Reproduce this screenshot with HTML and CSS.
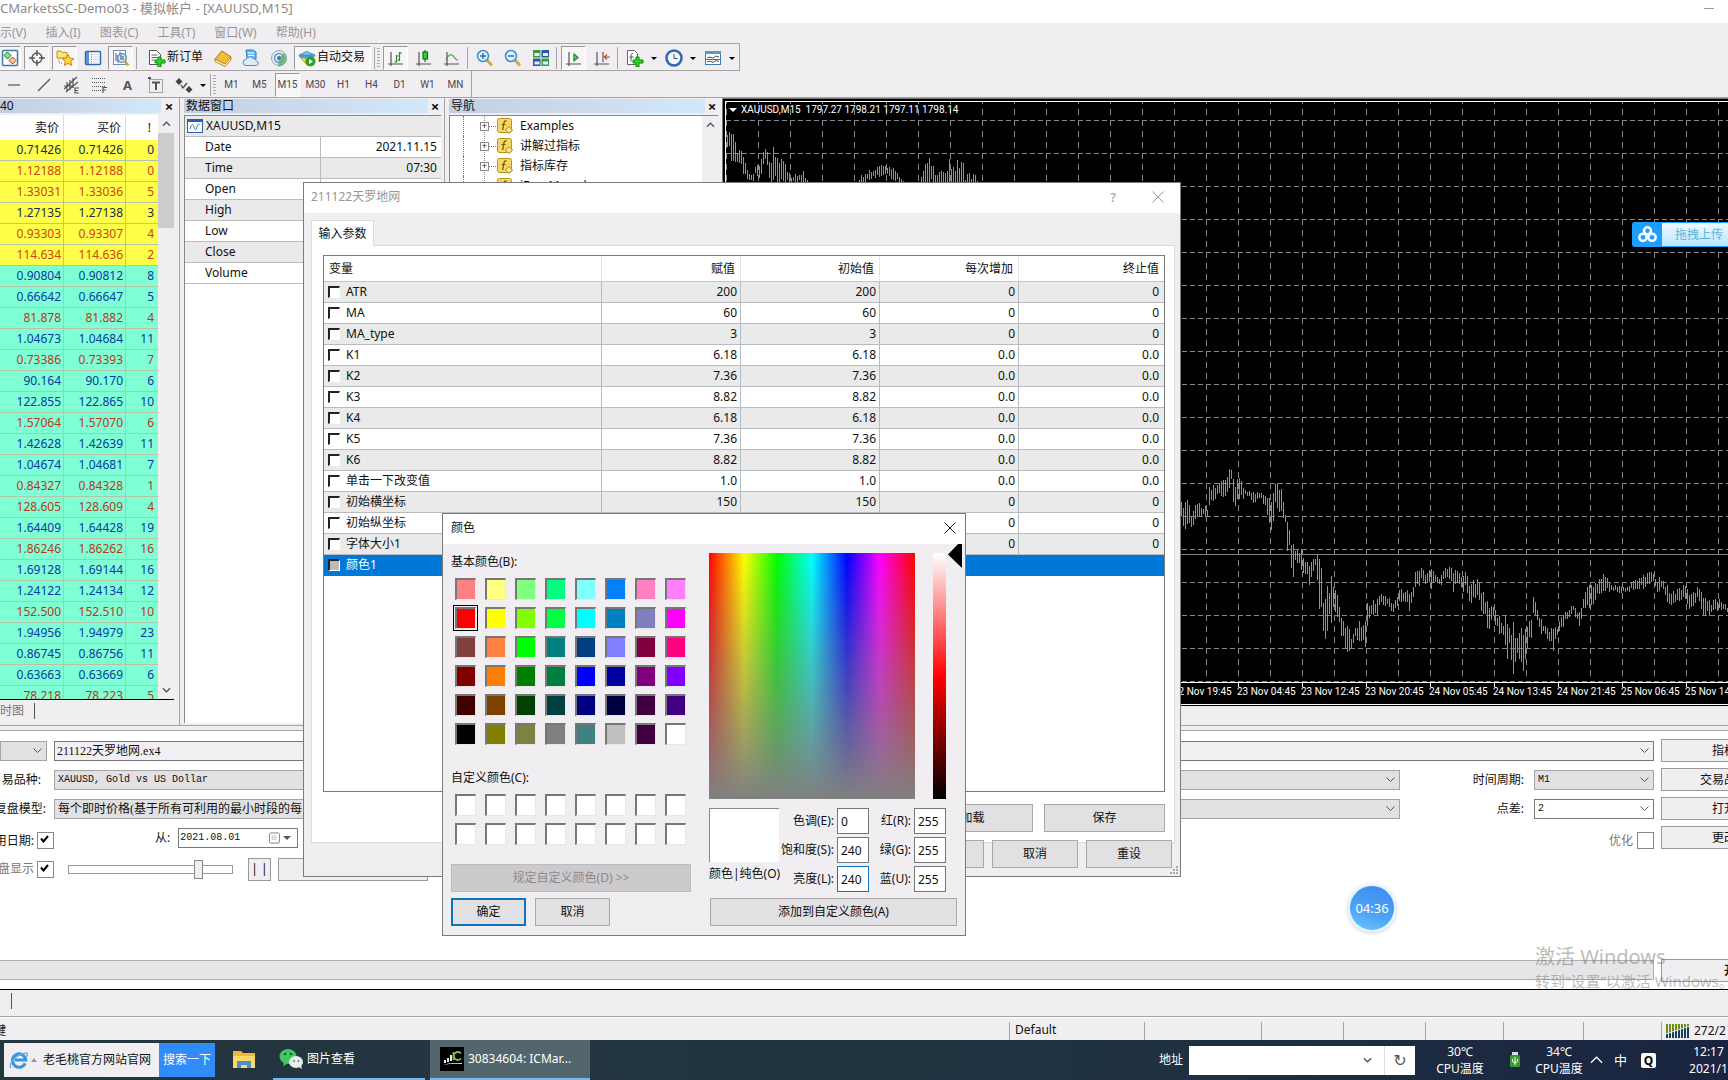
FILE: index.html
```html
<!DOCTYPE html>
<html lang="zh-CN">
  <head>
    <meta charset="UTF-8" />
    <meta name="viewport" content="width=device-width, initial-scale=1.0" />
    <title>CMarketsSC-Demo03 - 模拟帐户 - [XAUUSD,M15]</title>
    <link rel="stylesheet" href="styles.css">
  </head>

  <body>
    <header class="titlebar">
      <span>CMarketsSC-Demo03 - 模拟帐户 - [XAUUSD,M15]</span>
      <span class="minimize"></span>
    </header>

    <nav class="menubar">
      <a href="#">示(V)</a>
      <a href="#">插入(I)</a>
      <a href="#">图表(C)</a>
      <a href="#">工具(T)</a>
      <a href="#">窗口(W)</a>
      <a href="#">帮助(H)</a>
    </nav>

    <div class="toolbar toolbar-main">
      <button class="tool pressed first">
        <svg viewBox="0 0 18 18"><rect x="1.500" y="1.500" width="15" height="15" rx="1" fill="#fff" stroke="#3d7ab8" stroke-width="1.500"/><path d="M6.500 3l3.500 3.500-3.500 3.500L3 6.500z" fill="#8be08b" stroke="#187018"/><path d="M11.500 8l3.500 3.500-3.500 3.500L8 11.500z" fill="#ffc0a0" stroke="#d03010"/></svg>
      </button>
      <button class="tool pressed">
        <svg viewBox="0 0 18 18" fill="none" stroke="#555" stroke-width="1.400"><circle cx="9" cy="9" r="5"/><path d="M9 1v6M9 11v6M1 9h6M11 9h6"/></svg>
      </button>
      <button class="tool pressed">
        <svg viewBox="0 0 18 18"><path d="M1 2h4l1 1.500h5V9H1z" fill="#ffe57a" stroke="#c09018"/><path d="M3 10v4h4" fill="none" stroke="#888" stroke-dasharray="1 1"/><path d="M12 5.500l1.800 3.700 4 .5-3 2.700.8 4-3.600-2-3.600 2 .8-4-3-2.700 4-.5z" fill="#ffd83a" stroke="#c08a10"/></svg>
      </button>
      <button class="tool">
        <svg viewBox="0 0 18 18"><rect x="1.500" y="2.500" width="15" height="13" rx="1" fill="#fff" stroke="#3568a0" stroke-width="1.500"/><path d="M2 3h3v12H2z" fill="#5b93d0"/><path d="M7 5.500h1M7 8h1M7 10.500h1M7 13h1" stroke="#555"/><path d="M9 5.500h6M9 8h6M9 10.500h6M9 13h6" stroke="#c8daf0"/></svg>
      </button>
      <button class="tool pressed">
        <svg viewBox="0 0 18 18"><rect x="1.500" y="1.500" width="12" height="14" fill="#fff" stroke="#6c8eb0"/><path d="M4 4v8M6 6v8M8 3v4" stroke="#447"/><circle cx="10" cy="9" r="4.300" fill="#cfe6f8" fill-opacity=".85" stroke="#5a86b4" stroke-width="1.300"/><path d="M9 6v5M11 7v4" stroke="#447"/><path d="M13 12.500l3.500 4" stroke="#d8a030" stroke-width="2.500"/></svg>
      </button>
      <span class="sep"></span>
      <button class="tool wide order">
        <svg viewBox="0 0 18 18"><path d="M1.500 1.500h7l4 4v10h-11z" fill="#fff" stroke="#555"/><path d="M3.500 6h6M3.500 8.500h6M3.500 11h3" stroke="#666"/><path d="M10 8h3v3h4v3h-4v4h-3v-4H7v-3h3z" fill="#2fd02f" stroke="#0c8a0c"/></svg>
        新订单
      </button>
      <button class="tool">
        <svg viewBox="0 0 18 18"><path d="M1 10l7-8 9 6-6 8z" fill="#f2bd3c" stroke="#a8700c"/><path d="M1 10l10 5 6-7v3l-6 6.500L1 12.500z" fill="#fff0b8" stroke="#a8700c" stroke-width=".8"/></svg>
      </button>
      <button class="tool">
        <svg viewBox="0 0 18 18"><path d="M4 1h7l3 2v7H5z" fill="#6cb8f0" stroke="#2e80c8"/><path d="M6 4h6M6 6.500h6" stroke="#fff"/><path d="M4 16.500a3 3 0 0 1 0-6 4 4 0 0 1 7-1 3.500 3.500 0 0 1 3.500 2.500A2.300 2.300 0 0 1 14.500 16.500z" fill="#dcebfa" stroke="#5a8ac0"/></svg>
      </button>
      <button class="tool">
        <svg viewBox="0 0 18 18" fill="none"><circle cx="9" cy="9" r="7.500" fill="#e4ecf4" stroke="#8aa8c8"/><circle cx="9" cy="9" r="4.500" stroke="#6c98c8" stroke-width="1.500"/><path d="M9 9l-1 8.500A8 8 0 0 0 16.500 9a7 7 0 0 0-2.500-5z" fill="#4db04d" fill-opacity=".7"/><circle cx="9" cy="9" r="2" fill="#3878c0"/></svg>
      </button>
      <button class="tool wide pressed auto">
        <svg viewBox="0 0 18 18"><path d="M2 8.500h13l-5 8.500z" fill="#f4cf48" stroke="#b08818" stroke-width=".7"/><ellipse cx="9" cy="6.500" rx="8.500" ry="3" fill="#4a9ed8"/><path d="M4 6a5 5 0 0 1 9.500 0z" fill="#7cc4ee" stroke="#2a78b0" stroke-width=".6"/><circle cx="12.500" cy="12.500" r="5" fill="#28a428"/><path d="M11 10v5l4-2.500z" fill="#fff"/></svg>
        自动交易
      </button>
      <span class="sep"></span>
      <span class="grip"></span>
      <button class="tool pressed">
        <svg viewBox="0 0 18 18" fill="none" stroke="#555" stroke-width="1.200"><path d="M4 3v14M1 15h15"/><path d="M7.500 13h2V6M9.500 7h2M12.500 12V3M12.500 4H15M10.500 11h2" stroke="#2a8a2a"/></svg>
      </button>
      <button class="tool">
        <svg viewBox="0 0 18 18" fill="none" stroke="#555" stroke-width="1.200"><path d="M4 3v14M1 15h15"/><path d="M10 1v12" stroke="#187018"/><rect x="8" y="3" width="4.500" height="7" fill="#2fd02f" stroke="#187018"/></svg>
      </button>
      <button class="tool">
        <svg viewBox="0 0 18 18" fill="none" stroke="#555" stroke-width="1.200"><path d="M4 3v14M1 15h15"/><path d="M3 11c3-7 6-6 8-3s3 3 4 3" stroke="#3a9a3a"/></svg>
      </button>
      <span class="sep"></span>
      <button class="tool">
        <svg viewBox="0 0 18 18"><path d="M10.500 10.500l5.500 6" stroke="#d8a838" stroke-width="3"/><circle cx="7" cy="7" r="5.500" fill="#dff0ff" stroke="#3f8ecc" stroke-width="1.500"/><path d="M4 7h6M7 4v6" stroke="#2a70b0" stroke-width="1.500"/></svg>
      </button>
      <button class="tool">
        <svg viewBox="0 0 18 18"><path d="M10.500 10.500l5.500 6" stroke="#d8a838" stroke-width="3"/><circle cx="7" cy="7" r="5.500" fill="#dff0ff" stroke="#3f8ecc" stroke-width="1.500"/><path d="M4 7h6" stroke="#2a70b0" stroke-width="1.500"/></svg>
      </button>
      <button class="tool">
        <svg viewBox="0 0 18 18"><path d="M1 1h7.500v7.500H1zM9.500 9.500H17V17H9.500z" fill="#3c9a3c"/><path d="M9.500 1H17v7.500H9.500zM1 9.500h7.500V17H1z" fill="#2858a8"/><path d="M2.500 4h5v3h-5zM11 4h5v3h-5zM2.500 12.500h5v3h-5zM11 12.500h5v3h-5z" fill="#dff0ff"/></svg>
      </button>
      <span class="sep"></span>
      <button class="tool pressed">
        <svg viewBox="0 0 18 18" fill="none" stroke="#555" stroke-width="1.200"><path d="M4 3v14M1 15h15"/><path d="M9 5v7l4-3.500z" fill="#6fd06f" stroke="#1a8a1a"/></svg>
      </button>
      <button class="tool">
        <svg viewBox="0 0 18 18" fill="none" stroke="#555" stroke-width="1.200"><path d="M4 3v14M1 15h15M10 3v10"/><path d="M17 8h-5M14 5.500L11.500 8l2.500 2.500" stroke="#b84a20"/></svg>
      </button>
      <span class="sep"></span>
      <button class="tool drop">
        <svg viewBox="0 0 18 18"><path d="M1.500 1.500h7l3 3v11h-10z" fill="#fff" stroke="#666"/><path d="M7 4.500c-2 0-2 1-2 3v5M3.500 8h4" fill="none" stroke="#555"/><path d="M10 8h3v3h4v3h-4v4h-3v-4H7v-3h3z" fill="#2fd02f" stroke="#0c8a0c"/></svg>
        <i class="caret"></i>
      </button>
      <button class="tool drop">
        <svg viewBox="0 0 18 18"><circle cx="9" cy="9" r="7.500" fill="#f4faff" stroke="#2a68b8" stroke-width="2.500"/><path d="M9 5v4.500h3.500" fill="none" stroke="#444"/></svg>
        <i class="caret"></i>
      </button>
      <button class="tool drop">
        <svg viewBox="0 0 18 18"><rect x="1.500" y="2.500" width="15" height="13" fill="#fff" stroke="#3f78b0"/><path d="M1 2h16v3H1z" fill="#5a98d0"/><path d="M3 9l3-1 3 1 3-2 3 1M3 13l3-1 3 1.500 3-2 3 1" fill="none" stroke="#555"/><path d="M2 10.500h14" stroke="#3f78b0"/></svg>
        <i class="caret"></i>
      </button>
    </div>

    <div class="toolbar toolbar-lines">
      <button class="tool first line-tool">
        <svg viewBox="0 0 18 18" stroke="#555" stroke-width="1.200"><path d="M3 9h12"/></svg>
      </button>
      <button class="tool">
        <svg viewBox="0 0 18 18" stroke="#555" stroke-width="1.200"><path d="M3 15L15 3"/></svg>
      </button>
      <button class="tool">
        <svg viewBox="0 0 18 18" fill="none" stroke="#555" stroke-width="1.200"><path d="M1 13L14 1M3 16L15 6M4 6v9M7 4v10M10 2v10M1 10h10"/><path d="M16 12h-4v5h4M12 14.500h3"/></svg>
      </button>
      <button class="tool">
        <svg viewBox="0 0 18 18" fill="none" stroke="#555"><path d="M1 2.500h14M1 6.500h14M1 10.500h14M1 14.500h9" stroke-dasharray="1 1"/><path d="M16 11.500h-4V17M12 14h3" stroke-width="1.200"/></svg>
      </button>
      <button class="tool glyph">A</button>
      <button class="tool">
        <svg viewBox="0 0 18 18" fill="none" stroke="#555"><rect x="2.500" y="3.500" width="13" height="13" stroke-dasharray="1 1"/><path d="M5 6.500h8M9 6v8" stroke-width="2"/><path d="M1 2h3" stroke-width="2"/></svg>
      </button>
      <button class="tool drop">
        <svg viewBox="0 0 18 18" fill="#444"><path d="M4 2l3.500 3.500L4 9 .5 5.500zM14 10l3.500 3.500L14 17l-3.500-3.500z"/><path d="M6 9l2 3 4-5" fill="none" stroke="#444" stroke-width="1.300"/></svg>
        <i class="caret"></i>
      </button>
      <span class="sep"></span>
      <span class="grip"></span>
      <button class="tool period">M1</button>
      <button class="tool period">M5</button>
      <button class="tool period pressed">M15</button>
      <button class="tool period">M30</button>
      <button class="tool period">H1</button>
      <button class="tool period">H4</button>
      <button class="tool period">D1</button>
      <button class="tool period">W1</button>
      <button class="tool period">MN</button>
    </div>

    <main class="workspace">
      <section class="dock market">
        <div class="dock-title"><span>40</span><button class="dock-close">×</button></div>
        <div class="market-body">
          <table class="quotes">
            <thead>
              <tr><th class="price">卖价</th><th>买价</th><th class="spread">!</th></tr>
            </thead>
            <tbody id="quotes"></tbody>
          </table>
          <div class="scrollbar">
            <svg class="chev" viewBox="0 0 10 6"><path d="M1 5l4-4 4 4"/></svg>
            <div class="scroll-thumb"></div>
            <svg class="chev scroll-down" viewBox="0 0 10 6"><path d="M1 1l4 4 4-4"/></svg>
          </div>
        </div>
        <div class="dock-tabs">时图</div>
      </section>

      <section class="dock datawin">
        <div class="dock-title"><span>数据窗口</span><button class="dock-close">×</button></div>
        <div class="data-body">
          <div class="data-symbol">
            <svg viewBox="0 0 16 14"><rect x=".5" y=".5" width="15" height="13" fill="#fff" stroke="#2860b0"/><path d="M0 0h16v3H0z" fill="#2860b0"/><path d="M3 10c2-6 3-5 4-2s2 4 3 0 2-3 3-2" fill="none" stroke="#3a78c0"/></svg>
            XAUUSD,M15
          </div>
          <table class="data-table">
            <tr><td>Date</td><td>2021.11.15</td></tr>
            <tr><td>Time</td><td>07:30</td></tr>
            <tr><td>Open</td><td></td></tr>
            <tr><td>High</td><td></td></tr>
            <tr><td>Low</td><td></td></tr>
            <tr><td>Close</td><td></td></tr>
            <tr><td>Volume</td><td></td></tr>
          </table>
        </div>
      </section>

      <section class="dock navigator">
        <div class="dock-title"><span>导航</span><button class="dock-close">×</button></div>
        <div class="nav-body">
          <ul class="tree" id="tree"></ul>
          <div class="scrollbar">
            <svg class="chev" viewBox="0 0 10 6"><path d="M1 5l4-4 4 4"/></svg>
          </div>
        </div>
      </section>

      <section class="chart">
        <div class="chart-frame">
          <svg class="plot">
            <defs>
              <pattern id="grid" width="32" height="33" patternUnits="userSpaceOnUse" y="18">
                <path d="M0 .5h32" stroke="#85858d" stroke-dasharray="5 3"/>
                <path d="M.5 0v33" stroke="#85858d" stroke-dasharray="6 5"/>
              </pattern>
            </defs>
            <rect width="100%" height="100%" fill="url(#grid)"/>
            <path class="price-line" d="M0 452.500h4000"/>
            <path class="bars" id="bars"/>
          </svg>
          <p class="chart-head"><i class="caret white"></i>XAUUSD,M15&nbsp; 1797.27 1798.21 1797.11 1798.14</p>
          <div class="time-axis" id="times"></div>
        </div>
      </section>
    </main>

    <form class="tester">
      <div class="tester-main">
        <div class="row">
          <select class="field kind" aria-label="类型"><option></option></select>
          <select class="field expert grow serif" aria-label="指标"><option>211122天罗地网.ex4</option></select>
        </div>
        <div class="row">
          <label class="left-label inset" for="symbol">易品种:</label>
          <select class="field gray symbol mono" id="symbol"><option>XAUUSD, Gold vs US Dollar</option></select>
          <label class="right-label" for="period">时间周期:</label>
          <select class="field gray small mono" id="period"><option>M1</option></select>
        </div>
        <div class="row">
          <label class="left-label" for="model">复盘模型:</label>
          <select class="field gray symbol serif" id="model"><option>每个即时价格(基于所有可利用的最小时段的每</option></select>
          <label class="right-label" for="spread">点差:</label>
          <select class="field small mono" id="spread"><option>2</option></select>
        </div>
        <div class="row">
          <label class="check-label" for="usedate">用日期:</label>
          <input type="checkbox" class="box" id="usedate" checked>
          <label class="from-label" for="from">从:</label>
          <span class="date">
            <input type="text" class="mono" id="from" value="2021.08.01">
            <svg viewBox="0 0 12 12"><rect x=".5" y=".5" width="11" height="11" rx="1.500" fill="#fff" stroke="#777"/><path d="M3 3.500h6M3 5.500h6M3 7.500h6" stroke="#888" stroke-dasharray="1 1"/></svg>
            <i class="caret gray-caret"></i>
          </span>
          <label class="opt-label" for="optimize">优化</label>
          <input type="checkbox" class="box" id="optimize">
        </div>
        <div class="row visual-row">
          <label class="check-label muted" for="visual">盘显示</label>
          <input type="checkbox" class="box" id="visual" checked>
          <input type="range" class="speed" min="0" max="100" value="81" aria-label="速度">
          <button type="button" class="flat pause">| |</button>
          <button type="button" class="flat skip"></button>
        </div>
        <div class="progress"></div>
      </div>
      <div class="tester-side">
        <button type="button" class="flat">指标属性</button>
        <button type="button" class="flat">交易品种属性</button>
        <button type="button" class="flat">打开图表</button>
        <button type="button" class="flat">更改设置</button>
        <button type="button" class="flat start">开始</button>
      </div>
    </form>

    <div class="tester-tabs"></div>

    <footer class="statusbar">
      <span class="hint">键</span>
      <span class="cell profile">Default</span>
      <span class="cell w117"></span>
      <span class="cell w82"></span>
      <span class="cell w82"></span>
      <span class="cell w78"></span>
      <span class="cell w80"></span>
      <span class="cell w78"></span>
      <span class="cell traffic">
        <svg viewBox="0 0 24 14"><path d="M1 0v14M4 0v14M7 0v14M10 0v14M13 0v14M16 0v14M19 0v14M22 0v14" stroke="#12405c" stroke-width="2"/><path d="M1 0v9M4 0v8M7 0v7M10 0v6M13 0v5M16 0v4M19 0v3M22 0v2" stroke="#6c8c18" stroke-width="2"/><path d="M0 10L24 2" stroke="#f0eef1"/></svg>
        272/2
      </span>
    </footer>

    <footer class="taskbar">
      <div class="search">
        <svg class="ie" viewBox="0 0 20 20"><path d="M17 13a7 7 0 1 1 .6-3.500H6" fill="none" stroke="#3a94e0" stroke-width="3.200"/><path d="M2 18C-1 14 8 3 18 2c2 0 2 2 0 4" fill="none" stroke="#5cb4f0" stroke-width="1.500"/></svg>
        <i class="caret-up"></i>
        <span class="search-text">老毛桃官方网站官网</span>
        <button class="search-go">搜索一下</button>
      </div>
      <a class="task folder" href="#">
        <svg viewBox="0 0 22 20"><path d="M0 1h8l2 2h12v15H0z" fill="#f0b73c"/><path d="M0 6h22v12H0z" fill="#ffd968"/><path d="M4 11h14v7h-4v-3H8v3H4z" fill="#4a90c8"/></svg>
      </a>
      <a class="task opened" href="#">
        <svg viewBox="0 0 24 20"><path d="M5 13l-1 4 4-2z" fill="#40c860"/><ellipse cx="9" cy="7.500" rx="8.500" ry="7.500" fill="#40c860"/><ellipse cx="17" cy="13" rx="7" ry="6" fill="#e8eef0"/><path d="M20 18l3 2-1-4z" fill="#e8eef0"/><circle cx="6" cy="5" r="1.200" fill="#1b5a30"/><circle cx="12" cy="5" r="1.200" fill="#1b5a30"/><circle cx="15" cy="12" r="1" fill="#777"/><circle cx="19.500" cy="12" r="1" fill="#777"/></svg>
        图片查看
      </a>
      <a class="task active" href="#">
        <svg viewBox="0 0 24 24"><rect width="24" height="24"/><path d="M2 19c6-4 12-3 20-3v1c-8 0-13-1-20 2zM4 13h2v3H4zM7 11h2v4H7zM10 8h2v6h-2z" fill="#e8eee8"/><path d="M13.500 5v8M21 6.500a4 4 0 1 0 0 5" fill="none" stroke="#7fb84a" stroke-width="1.800"/></svg>
        30834604: ICMar...
      </a>
      <div class="tray">
        <label for="address">地址</label>
        <div class="address">
          <input id="address" type="text">
          <svg class="chev" viewBox="0 0 10 6"><path d="M1 1l4 4 4-4"/></svg>
          <button class="reload">↻</button>
        </div>
        <p class="temp first-temp">30℃<br>CPU温度</p>
        <svg class="usb" viewBox="0 0 12 16"><path d="M3 0h6v4H3z" fill="#ddd"/><rect x="1" y="3" width="10" height="12" rx="1.500" fill="#3f9a34"/><path d="M6 5v8M3.500 7v2.500L6 11l2.500-1.500V7" fill="none" stroke="#fff"/></svg>
        <p class="temp">34℃<br>CPU温度</p>
        <svg class="up" viewBox="0 0 14 8"><path d="M1 7l6-6 6 6" fill="none" stroke="#fff" stroke-width="1.300"/></svg>
        <span class="ime">中</span>
        <span class="qicon">Q</span>
        <p class="clock">12:17<br>2021/1</p>
      </div>
    </footer>

    <p class="watermark"><b>激活 Windows</b>转到“设置”以激活 Windows。</p>
    <div class="upload">
      <span class="upload-icon">
        <svg viewBox="0 0 20 18" fill="none" stroke="#fff" stroke-width="2.600"><circle cx="10" cy="5" r="3.700"/><circle cx="5.200" cy="12" r="3.900"/><circle cx="14.800" cy="12" r="3.900"/></svg>
      </span>
      <span class="upload-text">拖拽上传</span>
    </div>
    <div class="timer">04:36</div>

    <section class="dialog params">
      <div class="dialog-title faded">
        <span>211122天罗地网</span>
        <button class="help">?</button>
        <button class="x"><svg viewBox="0 0 12 12"><path d="M.5.5l11 11M11.500.5l-11 11"/></svg></button>
      </div>
      <div class="tabs"><button class="tab">输入参数</button></div>
      <div class="page">
        <div class="list">
          <table class="inputs">
            <colgroup><col class="c-name"><col class="c-num"><col class="c-num"><col class="c-num"><col></colgroup>
            <thead>
              <tr><th>变量</th><th>赋值</th><th>初始值</th><th>每次增加</th><th>终止值</th></tr>
            </thead>
            <tbody id="inputs"></tbody>
          </table>
        </div>
        <div class="page-actions">
          <button class="btn">加载</button>
          <button class="btn">保存</button>
        </div>
      </div>
      <div class="dialog-actions">
        <button class="btn">确定</button>
        <button class="btn">取消</button>
        <button class="btn">重设</button>
      </div>
      <svg class="resize" viewBox="0 0 8 8"><path d="M6 0h2v2H6zM3 3h2v2H3zM6 3h2v2H6zM0 6h2v2H0zM3 6h2v2H3zM6 6h2v2H6z" fill="#aaa"/></svg>
    </section>

    <section class="dialog colors">
      <div class="dialog-title">
        <span>颜色</span>
        <button class="x"><svg viewBox="0 0 12 12"><path d="M.5.5l11 11M11.500.5l-11 11"/></svg></button>
      </div>
      <div class="colors-body">
        <div class="colors-left">
          <p class="caption">基本颜色(B):</p>
          <div class="swatches" id="basic"></div>
          <p class="caption custom-caption">自定义颜色(C):</p>
          <div class="swatches" id="custom"></div>
          <button class="btn define" disabled>规定自定义颜色(D) &gt;&gt;</button>
          <div class="ok-row">
            <button class="btn default">确定</button>
            <button class="btn">取消</button>
          </div>
        </div>
        <div class="colors-right">
          <div class="pickers">
            <div class="hue"></div>
            <div class="lum"></div>
            <svg class="lum-arrow" viewBox="0 0 14 24"><path d="M0 10.500L12 -2h2v26z"/></svg>
          </div>
          <div class="values">
            <div class="solid">
              <div class="solid-box"></div>
              <span>颜色|纯色(O)</span>
            </div>
            <div class="nums">
              <label for="h">色调(E):</label><input id="h" value="0">
              <label for="r">红(R):</label><input id="r" value="255">
              <label for="s">饱和度(S):</label><input id="s" value="240">
              <label for="g">绿(G):</label><input id="g" value="255">
              <label for="l">亮度(L):</label><input id="l" class="focus" value="240">
              <label for="b">蓝(U):</label><input id="b" value="255">
            </div>
          </div>
          <button class="btn add">添加到自定义颜色(A)</button>
        </div>
      </div>
    </section>

    <script>
      //market watch: bid, ask, spread, direction
      const quotes = [
        ["0.71426", "0.71426", 0, "up"], ["1.12188", "1.12188", 0, "down"],
        ["1.33031", "1.33036", 5, "down"], ["1.27135", "1.27138", 3, "up"],
        ["0.93303", "0.93307", 4, "down"], ["114.634", "114.636", 2, "down"],
        ["0.90804", "0.90812", 8, "up"], ["0.66642", "0.66647", 5, "up"],
        ["81.878", "81.882", 4, "down"], ["1.04673", "1.04684", 11, "up"],
        ["0.73386", "0.73393", 7, "down"], ["90.164", "90.170", 6, "up"],
        ["122.855", "122.865", 10, "up"], ["1.57064", "1.57070", 6, "down"],
        ["1.42628", "1.42639", 11, "up"], ["1.04674", "1.04681", 7, "up"],
        ["0.84327", "0.84328", 1, "down"], ["128.605", "128.609", 4, "down"],
        ["1.64409", "1.64428", 19, "up"], ["1.86246", "1.86262", 16, "down"],
        ["1.69128", "1.69144", 16, "up"], ["1.24122", "1.24134", 12, "up"],
        ["152.500", "152.510", 10, "down"], ["1.94956", "1.94979", 23, "up"],
        ["0.86745", "0.86756", 11, "up"], ["0.63663", "0.63669", 6, "up"],
        ["78.218", "78.223", 5, "down"]
      ];
      document.querySelector("#quotes").innerHTML = quotes
        .map((q, i) => `<tr class="${q[3]}${i < 6 ? " major" : ""}"><td>${q[0]}</td><td>${q[1]}</td><td>${q[2]}</td></tr>`)
        .join("");

      //navigator
      const icon = `<svg viewBox="0 0 16 16"><rect x=".5" y=".5" width="14" height="14" rx="2" fill="#f6d860" stroke="#b8921c"/><path d="M9.500 3c-2-.5-2.500 1-2.800 3l-1 6M4.500 6.500h4" fill="none" stroke="#6b5208" stroke-width="1.200"/><path d="M12 8.500l3.500 3.500-3.500 3.500L8.500 12z" fill="#fbe99a" stroke="#a8821a"/></svg>`;
      document.querySelector("#tree").innerHTML = ["Examples", "讲解过指标", "指标库存", "iFxp_Moved"]
        .map(name => `<li><i class="plus">+</i><i class="twig"></i>${icon}${name}</li>`)
        .join("");

      //inputs of the indicator
      const inputs = [
        ["ATR", "200", "0"], ["MA", "60", "0"], ["MA_type", "3", "0"],
        ["K1", "6.18", "0.0"], ["K2", "7.36", "0.0"], ["K3", "8.82", "0.0"],
        ["K4", "6.18", "0.0"], ["K5", "7.36", "0.0"], ["K6", "8.82", "0.0"],
        ["单击一下改变值", "1.0", "0.0"], ["初始横坐标", "150", "0"],
        ["初始纵坐标", "", "0"], ["字体大小1", "", "0"], ["颜色1", "", ""]
      ];
      document.querySelector("#inputs").innerHTML = inputs
        .map(([n, v, s], i) => `<tr${i == 13 ? ' class="selected"' : ""}><td><label><input type="checkbox">${n}</label></td><td>${v}</td><td>${v}</td><td>${s}</td><td>${s}</td></tr>`)
        .join("");

      //colour swatches
      const basic = `ff8080 ffff80 80ff80 00ff80 80ffff 0080ff ff80c0 ff80ff
        ff0000 ffff00 80ff00 00ff40 00ffff 0080c0 8080c0 ff00ff
        804040 ff8040 00ff00 008080 004080 8080ff 800040 ff0080
        800000 ff8000 008000 008040 0000ff 0000a0 800080 8000ff
        400000 804000 004000 004040 000080 000040 400040 400080
        000000 808000 808040 808080 408080 c0c0c0 400040 ffffff`.split(/\s+/);
      document.querySelector("#basic").innerHTML = basic
        .map((c, i) => `<button class="swatch${i == 8 ? " picked" : ""}" style="background:#${c}" aria-label="#${c}"></button>`)
        .join("");
      document.querySelector("#custom").innerHTML = '<button class="swatch" aria-label="空"></button>'.repeat(16);

      //price bars: x, high, low
      const points = [
        [1,28,51],[3,28,45],[7,38,64],[11,48,60],[16,53,66],[21,65,80],[26,75,80],[29,66,73],[34,60,73],[39,46,57],
        [44,58,78],[48,45,80],[52,61,78],[56,53,80],[60,64,80],[64,76,80],[76,70,80],[81,76,84],[90,90,110],[120,90,110],
        [134,75,84],[144,68,78],[157,64,71],[167,68,76],[177,78,84],[190,90,100],[196,75,90],[202,57,78],[211,76,90],
        [224,60,85],[232,64,90],[235,52,90],[239,76,90],[244,72,90],[249,77,95],[260,100,120],[300,200,230],[450,380,410],
        [456,403,413],[458,403,427],[462,403,423],[466,413,423],[471,400,416],[477,406,411],[481,406,415],[482,381,406],
        [487,385,397],[491,380,393],[499,381,393],[502,370,385],[505,368,380],[506,373,391],[508,386,403],[512,378,391],
        [514,380,396],[520,388,393],[527,391,400],[536,389,397],[540,398,408],[546,401,425],[549,381,404],[555,391,406],
        [559,414,421],[561,415,447],[564,425,451],[566,445,485],[570,446,455],[573,446,466],[576,451,466],[584,466,481],
        [589,455,465],[592,460,491],[596,480,523],[598,505,534],[602,483,526],[606,481,510],[610,493,515],[615,513,531],
        [620,530,547],[622,526,545],[625,538,547],[629,523,536],[634,521,536],[638,517,547],[641,505,523],[646,501,510],
        [650,498,513],[654,490,501],[660,495,503],[668,501,510],[674,487,498],[678,490,497],[683,491,506],[686,488,503],
        [689,464,491],[692,470,483],[695,468,478],[702,473,483],[706,466,483],[713,476,483],[721,465,474],[727,471,486],
        [732,462,485],[735,475,488],[740,472,486],[744,483,498],[753,477,495],[756,491,510],[763,503,526],[767,503,515],
        [772,515,528],[777,523,535],[781,514,549],[784,525,546],[786,526,569],[790,531,551],[794,527,561],[797,538,563],
        [800,528,546],[805,515,533],[806,492,516],[810,505,515],[813,516,528],[819,525,532],[827,530,545],[831,525,535],
        [838,511,521],[847,503,508],[853,511,525],[858,488,506],[866,486,500],[877,475,486],[887,483,490],[898,485,491],
        [908,480,486],[917,475,485],[926,470,478],[931,478,488],[936,476,485],[942,488,500],[949,491,501],[956,484,495],
        [964,491,505],[972,487,496],[978,498,512],[985,501,511],[994,498,506],[1002,506,511]
      ];
      let d = "";
      let p = 0;
      for (let x = 1; x <= 1002; x += 2) {
        while (p < points.length - 2 && points[p + 1][0] <= x) p++;
        const a = points[p];
        const b = points[p + 1];
        const t = (x - a[0]) / (b[0] - a[0]);
        const top = a[1] + (b[1] - a[1]) * t;
        const low = a[2] + (b[2] - a[2]) * t;
        const swing = (low - top) / 4;
        const hi = Math.round(top + Math.sin(x * x) * swing);
        const lo = Math.round(low + Math.cos(x * x * 3) * swing);
        d += `M${x}.5 ${hi}V${Math.max(lo, hi + 4)}`;
      }
      document.querySelector("#bars").setAttribute("d", d);

      document.querySelector("#times").innerHTML = [
        "18 Nov 04:45", "18 Nov 12:45", "18 Nov 20:45", "19 Nov 05:45", "19 Nov 13:45", "22 Nov 03:45", "22 Nov 11:45",
        "22 Nov 19:45", "23 Nov 04:45", "23 Nov 12:45", "23 Nov 20:45", "24 Nov 05:45",
        "24 Nov 13:45", "24 Nov 21:45", "25 Nov 06:45", "25 Nov 14:45"
      ].map(t => `<span>${t}</span>`).join("");
    </script>
  </body>
</html>
```

FILE: styles.css
```css
* {
  box-sizing: border-box;
}
body {
  margin: 0;
  height: 100vh;
  display: flex;
  flex-direction: column;
  position: relative;
  overflow: hidden;
  background: #f0eef1;
  color: #111;
  font-family: "Noto Sans", "Noto Sans CJK SC", sans-serif;
  font-size: 12px;
  line-height: 16px;
}
p,
ul {
  margin: 0;
  padding: 0;
}
button,
input,
select {
  font: inherit;
  color: inherit;
  margin: 0;
  border-radius: 0;
}
a {
  color: inherit;
  text-decoration: none;
}
table {
  border-collapse: separate;
  border-spacing: 0;
  table-layout: fixed;
}
th {
  font-weight: normal;
}

/* title and menu */
.titlebar {
  height: 23px;
  flex: none;
  display: flex;
  justify-content: space-between;
  background: #fff;
  color: #8c8a8d;
  font-size: 13px;
}
.minimize {
  width: 10px;
  height: 1px;
  margin: 8px 14px 0 0;
  background: #999;
}
.menubar {
  height: 20px;
  flex: none;
  display: flex;
  gap: 19px;
  padding-top: 2px;
  color: #99979a;
}

/* toolbars */
.toolbar {
  align-self: flex-start;
  flex: none;
  display: flex;
  align-items: center;
  gap: 3px;
  border-top: 1px solid #a5a3a6;
  border-right: 1px solid #a5a3a6;
}
.toolbar-main {
  height: 28px;
  padding: 2px 3px 0 0;
  border-bottom: 1px solid #a5a3a6;
}
.toolbar-lines {
  height: 26px;
  padding: 2px 3px 0 0;
  border-top: none;
}
.tool {
  width: 25px;
  height: 24px;
  padding: 0;
  display: flex;
  align-items: center;
  justify-content: center;
  flex: none;
  border: 1px solid transparent;
  background: none;
}
.tool svg {
  width: 18px;
  height: 18px;
  flex: none;
}
.tool.first {
  width: 21px;
  border-left: none;
}
.tool.line-tool {
  width: 28px;
}
.tool.pressed {
  border-color: #9a989b #fff #fff #9a989b;
  background: #f6f5f7;
}
.tool.wide {
  width: auto;
  gap: 1px;
  padding: 0 3px 2px 3px;
}
.tool.wide svg {
  position: relative;
  top: 1px;
}
.tool.order {
  padding-left: 6px;
}
.tool.auto {
  padding-right: 5px;
}
.tool.drop {
  width: 36px;
  justify-content: space-between;
  padding-left: 3px;
}
.tool.glyph {
  font-size: 13px;
  font-weight: bold;
  color: #555;
}
.tool.period {
  font-family: Roboto, sans-serif;
  font-size: 10px;
  color: #4a484b;
}
.sep {
  width: 1px;
  height: 22px;
  margin-right: 1px;
  background: #a5a3a6;
}
.grip {
  width: 3px;
  height: 20px;
  margin-left: -2px;
  background: repeating-linear-gradient(#aaa 0 1px, transparent 1px 3px);
}
.caret {
  width: 0;
  border: 3px solid transparent;
  border-top-color: #000;
  border-bottom: none;
}
.caret.white {
  border-width: 4px;
  border-bottom: none;
  border-top-color: #fff;
}
.caret.gray-caret {
  border-width: 4px;
  border-bottom: none;
  border-top-color: #556;
}

/* docked panels */
.workspace {
  flex: 1;
  min-height: 0;
  display: flex;
  gap: 4px;
  border-top: 1px solid #a5a3a6;
  border-bottom: 1px solid #a5a3a6;
}
.dock {
  flex: none;
  display: flex;
  flex-direction: column;
  border-right: 1px solid #a5a3a6;
}
.dock-title {
  height: 17px;
  flex: none;
  display: flex;
  justify-content: space-between;
  padding: 0 0 0 2px;
  line-height: 15px;
  background: linear-gradient(90deg, #c2cfe2, #d4e7fa) no-repeat 0 1px / calc(100% - 13px) 14px;
}
.dock-close {
  width: 12px;
  padding: 0;
  border: none;
  background: none;
  font-size: 15px;
  font-weight: bold;
}
.market {
  width: 180px;
}
.market .dock-title {
  padding: 0 4px 0 0;
  background-size: calc(100% - 18px) 14px;
}
.market-body {
  flex: 1;
  min-height: 0;
  margin-right: 5px;
  display: flex;
  align-items: flex-start;
  overflow: hidden;
  background: #fff;
  border-bottom: 1px solid #000;
}
.quotes {
  width: 158px;
  text-align: right;
}
.quotes th {
  height: 25px;
  padding: 0 4px 0 0;
  border-right: 1px solid #dcdcdc;
}
.quotes .price {
  width: 64px;
}
.quotes .spread {
  width: 32px;
  padding-right: 7px;
  border-right: none;
}
.quotes td {
  height: 21px;
  padding: 0 2px 0 0;
  border-right: 1px solid #b4c4a8;
  border-bottom: 1px solid #b4c4a8;
  background: #80ffd4;
}
.quotes td:last-child {
  padding-right: 4px;
  border-right: none;
}
.quotes .major td {
  background: #ffff4a;
}
.quotes .up {
  color: #0838a8;
}
.quotes .up.major {
  color: #222a4a;
}
.quotes .down {
  color: #b8381c;
}
.quotes .down.major {
  color: #cc4410;
}
.scrollbar {
  width: 16px;
  align-self: stretch;
  flex: none;
  display: flex;
  flex-direction: column;
  align-items: center;
  background: #f0eef1;
}
.chev {
  width: 9px;
  height: 6px;
  margin: 6px 0;
  flex: none;
  fill: none;
  stroke: #555;
  stroke-width: 1.500;
}
.scroll-thumb {
  width: 100%;
  height: 95px;
  background: #cdcbce;
}
.scroll-down {
  margin-top: auto;
}
.dock-tabs {
  width: 35px;
  height: 16px;
  margin: 3px 0 6px;
  border-right: 1px solid #555;
  color: #777;
}
.datawin {
  width: 261px;
  padding-right: 3px;
}
.data-body {
  flex: 1;
  margin-bottom: 2px;
  background: #fff;
  border-top: 1px solid #888;
  border-left: 1px solid #888;
}
.data-symbol {
  height: 21px;
  display: flex;
  align-items: center;
  gap: 3px;
  padding-left: 2px;
  background: #eaeaea;
  border-bottom: 1px solid #bbb;
}
.data-symbol svg {
  width: 16px;
  height: 14px;
}
.data-table {
  width: 100%;
}
.data-table td {
  height: 21px;
  padding: 0 4px 0 20px;
  border-bottom: 1px solid #bbb;
  line-height: 18px;
}
.data-table td:first-child {
  width: 136px;
  border-right: 1px solid #bbb;
}
.data-table td:last-child {
  text-align: right;
}
.data-table tr:nth-child(even) {
  background: #eaeaea;
}
.navigator {
  width: 269px;
  border-right: none;
}
.nav-body {
  flex: 1;
  display: flex;
  justify-content: space-between;
  background: #fff;
  border-top: 1px solid #888;
  border-left: 1px solid #888;
}
.tree {
  list-style: none;
  padding-left: 13px;
}
.tree li {
  height: 20px;
  display: flex;
  align-items: center;
  border-left: 1px dotted #777;
  padding-left: 16px;
  line-height: 18px;
  background: repeating-linear-gradient(#888 0 1px, #fff 1px 2px) no-repeat 20px 0 / 1px 100%;
}
.tree svg {
  width: 16px;
  height: 16px;
  margin: 0 7px 0 1px;
}
.plus {
  width: 9px;
  height: 9px;
  border: 1px solid #888;
  background: #fff;
  font: 9px/7px "Liberation Sans", sans-serif;
  text-align: center;
}
.twig {
  width: 7px;
  border-top: 1px dotted #777;
}

/* chart */
.chart {
  flex: 1;
  min-width: 0;
  margin-bottom: 19px;
  padding: 2px 0 1px 2px;
  background: #000;
  border-top: 1px solid #777;
  border-left: 1px solid #777;
}
.chart-frame {
  height: 100%;
  position: relative;
  display: flex;
  flex-direction: column;
  border-top: 1px solid #fff;
  border-left: 1px solid #fff;
  border-bottom: 1px solid #fff;
  color: #fff;
  font-family: Roboto, sans-serif;
  font-size: 10px;
}
.plot {
  width: 100%;
  flex: 1;
  min-height: 0;
  display: block;
}
.price-line {
  stroke: #80808a;
}
.bars {
  stroke: #46c846;
  fill: none;
}
.chart-head {
  position: absolute;
  left: 3px;
  top: 0;
  display: flex;
  align-items: center;
  gap: 4px;
}
.time-axis {
  height: 22px;
  flex: none;
  display: flex;
  overflow: hidden;
  border-top: 1px solid #fff;
}
.time-axis span {
  width: 64px;
  height: 4px;
  flex: none;
  border-left: 1px solid #fff;
  line-height: 18px;
  text-indent: -2px;
  white-space: nowrap;
}

/* strategy tester */
.tester {
  flex: none;
  display: flex;
  gap: 7px;
  margin-top: 4px;
  padding-top: 8px;
  background: #fff;
  border-top: 1px solid #a5a3a6;
  border-bottom: 1px solid #000;
  overflow: hidden;
}
.tester-main {
  flex: 1;
  display: flex;
  flex-direction: column;
}
.row {
  height: 29px;
  display: flex;
  align-items: center;
  padding-bottom: 5px;
}
.visual-row {
  margin-top: 2px;
}
.field {
  appearance: none;
  height: 20px;
  padding: 0 24px 0 3px;
  border: 1px solid #777;
  background: #fff url("data:image/svg+xml,%3Csvg xmlns='http://www.w3.org/2000/svg' width='9' height='6'%3E%3Cpath d='M.5.5l4 4 4-4' fill='none' stroke='%23555'/%3E%3C/svg%3E") no-repeat right 4px center;
}
.field.gray {
  background-color: #e1e0e3;
  border-color: #a5a3a6;
}
.field.expert {
  padding-left: 2px;
  background-color: #f2eff3;
}
.kind {
  width: 47px;
  margin-right: 7px;
  background-color: #e1e0e3;
  border-color: #a5a3a6;
}
.grow,
.symbol {
  flex: 1;
  min-width: 0;
}
.small {
  width: 120px;
}
.serif {
  font-family: "Liberation Serif", "Noto Sans CJK SC", serif;
}
.mono {
  font-family: "Liberation Mono", monospace;
  font-size: 10px;
}
.left-label {
  width: 46px;
  margin-right: 8px;
  display: flex;
  justify-content: flex-end;
  white-space: nowrap;
}
.left-label.inset {
  padding-right: 5px;
}
.right-label {
  width: 134px;
  padding-right: 10px;
  text-align: right;
}
.check-label {
  width: 37px;
  padding: 5px 3px 0 0;
  display: flex;
  justify-content: flex-end;
  white-space: nowrap;
}
.muted,
.opt-label {
  color: #777;
}
.opt-label {
  margin-left: auto;
  padding: 5px 4px 0 0;
}
.box {
  appearance: none;
  width: 17px;
  height: 17px;
  margin-top: 5px;
  border: 1px solid #888;
  background: #fff;
}
.visual-row .box,
.visual-row label {
  margin-top: 0;
  padding-top: 0;
}
.box:checked {
  background: #fff url("data:image/svg+xml,%3Csvg xmlns='http://www.w3.org/2000/svg' width='9' height='8'%3E%3Cpath d='M1 3.500l2.500 3L8 1' fill='none' stroke='%23000' stroke-width='2'/%3E%3C/svg%3E") no-repeat 2px 2px;
}
.from-label {
  margin: 0 8px 0 101px;
}
.date {
  width: 120px;
  height: 20px;
  display: flex;
  align-items: center;
  gap: 3px;
  padding-right: 6px;
  border: 1px solid #777;
}
.date input {
  flex: 1;
  min-width: 0;
  padding: 0 1px;
  border: none;
}
.date svg {
  width: 11px;
  height: 12px;
}
.speed {
  appearance: none;
  width: 165px;
  height: 20px;
  margin: 0 15px 0 14px;
  background: none;
}
.speed::-webkit-slider-runnable-track {
  height: 9px;
  border: 1px solid #999;
  background: #fff;
}
.speed::-webkit-slider-thumb {
  appearance: none;
  width: 9px;
  height: 19px;
  margin-top: -6px;
  border: 1px solid #888;
  background: #f0eef1;
}
.flat {
  height: 23px;
  padding: 0;
  border: 1px solid #9a989b;
  background: #f0eef1;
}
.pause {
  width: 23px;
  margin-right: 7px;
}
.skip {
  width: 150px;
}
.progress {
  height: 20px;
  margin: 74px 0 9px;
  border: 1px solid #b0aeb1;
  border-left: none;
  background: #e6e5e7;
}
.tester-side {
  width: 67px;
  display: flex;
  flex-direction: column;
  gap: 6px;
  overflow: hidden;
}
.tester-side .flat {
  width: 150px;
}
.tester-side .start {
  margin: auto 0 7px;
  font-weight: bold;
}
.tester-tabs {
  height: 27px;
  flex: none;
  padding-top: 3px;
  border-bottom: 1px solid #a5a3a6;
}
.tester-tabs::before {
  content: "";
  display: block;
  width: 11px;
  height: 16px;
  border-right: 1px solid #555;
}

/* status bar */
.statusbar {
  height: 23px;
  flex: none;
  display: flex;
  align-items: center;
  padding-top: 3px;
  border-top: 1px solid #fff;
}
.hint {
  flex: 1;
  text-indent: -6px;
}
.cell {
  height: 18px;
  flex: none;
  border-left: 1px solid #a5a3a6;
}
.profile {
  width: 135px;
  padding-left: 5px;
}
.w117 {
  width: 117px;
}
.w82 {
  width: 82px;
}
.w80 {
  width: 80px;
}
.w78 {
  width: 78px;
}
.traffic {
  width: 67px;
  display: flex;
  align-items: center;
  gap: 4px;
  padding-left: 4px;
}
.traffic svg {
  width: 24px;
  height: 14px;
}

/* windows taskbar */
.taskbar {
  height: 40px;
  flex: none;
  display: flex;
  align-items: center;
  background: linear-gradient(90deg, #24373f, #203342 60%, #1a2440);
  color: #fff;
}
.search {
  width: 211px;
  height: 34px;
  margin-left: 4px;
  display: flex;
  align-items: center;
  background: #f0eef1;
  color: #111;
}
.ie {
  width: 19px;
  height: 19px;
  margin-left: 5px;
}
.caret-up {
  margin: 0 6px 0 3px;
  border: 3px solid transparent;
  border-bottom: 4px solid #999;
  border-top: none;
}
.search-text {
  flex: 1;
  white-space: nowrap;
}
.search-go {
  width: 56px;
  height: 34px;
  padding: 0;
  border: none;
  background: #2f8cf8;
  color: #fff;
}
.task {
  height: 40px;
  display: flex;
  align-items: center;
  gap: 4px;
}
.folder {
  width: 58px;
  padding-left: 18px;
}
.folder svg {
  width: 22px;
  height: 20px;
}
.opened {
  width: 152px;
  margin-right: 5px;
  padding-left: 6px;
  border-bottom: 2px solid #76b9ed;
}
.opened svg {
  width: 24px;
  height: 20px;
}
.active {
  width: 160px;
  padding-left: 10px;
  background: #53666d;
  border-bottom: 2px solid #76b9ed;
}
.active svg {
  width: 24px;
  height: 24px;
}
.tray {
  margin-left: auto;
  display: flex;
  align-items: center;
}
.tray label {
  margin-right: 6px;
}
.address {
  width: 226px;
  height: 29px;
  display: flex;
  align-items: center;
  background: #fff;
}
.address input {
  flex: 1;
  min-width: 0;
  border: none;
}
.address .chev {
  margin-right: 12px;
}
.reload {
  width: 31px;
  height: 29px;
  padding: 0;
  border: none;
  border-left: 1px solid #ddd;
  background: none;
  color: #555;
  font: 16px "DejaVu Sans", sans-serif;
}
.temp {
  width: 48px;
  text-align: center;
  line-height: 17px;
}
.first-temp {
  margin-left: 21px;
}
.usb {
  width: 12px;
  height: 16px;
  margin: 0 14px 0 25px;
}
.up {
  width: 13px;
  height: 8px;
  margin: 0 11px 0 7px;
}
.ime {
  font-size: 13px;
  margin-right: 14px;
}
.qicon {
  width: 15px;
  height: 15px;
  border-radius: 2px;
  background: #fff;
  color: #000;
  font-weight: bold;
  line-height: 15px;
  text-align: center;
}
.clock {
  width: 39px;
  margin-left: 33px;
  text-align: center;
  line-height: 17px;
  white-space: nowrap;
}

/* floating things */
.watermark {
  position: absolute;
  right: -7px;
  bottom: 89px;
  width: 200px;
  font-size: 15px;
  line-height: 20px;
  white-space: nowrap;
  color: rgba(120, 120, 120, 0.5);
}
.watermark b {
  display: block;
  font-size: 20px;
  font-weight: normal;
  line-height: 28px;
}
.upload {
  position: absolute;
  right: 0;
  top: 222px;
  width: 96px;
  height: 25px;
  display: flex;
  border: 1px solid #1e9fff;
  border-right: none;
  border-radius: 3px 0 0 3px;
  background: #1e9fff;
}
.upload-icon {
  width: 29px;
  display: flex;
  align-items: center;
  justify-content: center;
}
.upload-icon svg {
  width: 19px;
  height: 17px;
}
.upload-text {
  flex: 1;
  padding-left: 13px;
  line-height: 23px;
  white-space: nowrap;
  background: linear-gradient(#f0faff, #b8e6fc);
  color: #58b4dc;
}
.timer {
  position: absolute;
  right: 332px;
  bottom: 148px;
  width: 48px;
  height: 48px;
  border-radius: 50%;
  box-shadow: 0 1px 4px #ccd;
  border: 2px solid #e0f6ff;
  background: linear-gradient(200deg, #3f88f0, #4aa4f8 60%, #70c8fc);
  color: #fff;
  font: 13px/44px "Noto Sans", sans-serif;
  text-align: center;
}

/* dialogs */
.dialog {
  position: absolute;
  display: flex;
  flex-direction: column;
  border: 1px solid #7c7a7d;
  background: #f0eef1;
}
.dialog-title {
  height: 30px;
  flex: none;
  display: flex;
  align-items: center;
  background: #fff;
  padding: 0 9px 2px 8px;
}
.dialog-title span {
  flex: 1;
}
.dialog-title.faded {
  color: #98969a;
  padding: 0 16px 3px 7px;
}
.help,
.x {
  padding: 0;
  border: none;
  background: none;
}
.help {
  font-size: 13px;
  margin-right: 36px;
}
.x {
  display: flex;
}
.x svg {
  width: 12px;
  height: 12px;
  stroke: currentColor;
}
.params {
  left: 303px;
  top: 182px;
  width: 878px;
  padding-bottom: 8px;
}
.tabs {
  padding: 7px 0 0 7px;
  display: flex;
}
.tab {
  width: 63px;
  height: 26px;
  margin-bottom: -1px;
  padding: 0;
  border: 1px solid #dcdadd;
  border-bottom: none;
  background: #fff;
  position: relative;
}
.page {
  margin: 0 5px 0 7px;
  padding: 9px 9px 10px 11px;
  border: 1px solid #dcdadd;
  background: #fff;
}
.list {
  height: 537px;
  border: 1px solid #7c7a7d;
}
.inputs {
  width: 100%;
}
.c-name {
  width: 278px;
}
.c-num {
  width: 139px;
}
.inputs th {
  height: 26px;
  padding: 0 5px;
  text-align: right;
  border-right: 1px solid #e4e4e4;
  border-bottom: 1px solid #c4c4c4;
}
.inputs th:first-child {
  text-align: left;
}
.inputs td {
  height: 21px;
  padding: 0 3px;
  line-height: 18px;
  text-align: right;
  border-right: 1px solid #b8bcc0;
  border-bottom: 1px solid #b8bcc0;
}
.inputs td:first-child {
  text-align: left;
  padding-left: 4px;
}
.inputs tr > :last-child {
  padding-right: 5px;
  border-right: none;
}
.inputs tbody tr:nth-child(odd) {
  background: #eaeaea;
}
.inputs tbody tr.selected,
.inputs tbody tr.selected:nth-child(even) {
  background: #0078d7;
  color: #fff;
}
.inputs .selected td {
  border-color: #0078d7;
}
.inputs label {
  display: flex;
  align-items: center;
  gap: 6px;
}
.inputs input {
  appearance: none;
  width: 12px;
  height: 12px;
  border: 1px solid #fff;
  border-top: 2px solid #222;
  border-left: 2px solid #222;
  background: #fff;
}
.inputs .selected input {
  background: #bbb;
}
.page-actions,
.dialog-actions {
  display: flex;
  justify-content: flex-end;
}
.page-actions {
  gap: 11px;
  margin-top: 12px;
}
.page-actions .btn {
  width: 121px;
}
.dialog-actions {
  gap: 8px;
  margin: -3px 8px 0 0;
  position: relative;
}
.dialog-actions .btn {
  width: 86px;
}
.btn {
  height: 28px;
  padding: 0;
  border: 1px solid #a9a7aa;
  background: #e1e0e3;
}
.resize {
  position: absolute;
  right: 2px;
  bottom: 2px;
  width: 8px;
  height: 8px;
}

/* colour dialog */
.colors {
  left: 442px;
  top: 513px;
  width: 524px;
}
.colors-body {
  display: flex;
  gap: 18px;
  padding: 9px 7px 9px 8px;
}
.colors-left {
  width: 241px;
  padding-top: 1px;
}
.swatches {
  display: grid;
  grid-template-columns: repeat(8, 21px);
  gap: 7px 9px;
  padding: 8px 3px 0 4px;
}
.swatch {
  height: 22px;
  padding: 0;
  border: 1px solid #e8e6e9;
  border-top: 2px solid #777;
  border-left: 2px solid #777;
  background: #fff;
}
.picked {
  outline: 1px solid #000;
  outline-offset: 1px;
}
.custom-caption {
  margin-top: 25px;
}
.define {
  width: 240px;
  margin-top: 19px;
}
.define:disabled {
  background: #cccacd;
  border-color: #bdbbbe;
  color: #8c8a8d;
}
.ok-row {
  display: flex;
  gap: 9px;
  margin-top: 6px;
}
.ok-row .btn {
  width: 75px;
}
.btn.default {
  border: 2px solid #0f74c4;
}
.colors-right {
  flex: 1;
  display: flex;
  flex-direction: column;
}
.pickers {
  height: 246px;
  display: flex;
}
.hue {
  width: 206px;
  background: linear-gradient(rgba(128, 128, 128, 0), #808080),
    linear-gradient(90deg, #f00, #ff0 17%, #0f0 33%, #0ff 50%, #00f 67%, #f0f 83%, #f00);
}
.lum {
  width: 13px;
  margin: 0 2px 0 18px;
  background: linear-gradient(#fff, #f00 50%, #000);
}
.lum-arrow {
  width: 14px;
  height: 24px;
  margin-top: -9px;
}
.values {
  display: flex;
  margin-top: 9px;
}
.solid {
  width: 72px;
  white-space: nowrap;
}
.solid-box {
  width: 70px;
  height: 54px;
  margin-bottom: 4px;
  background: #fff;
  border-top: 1px solid #888;
  border-left: 1px solid #888;
}
.nums {
  display: grid;
  grid-template-columns: 53px 32px 39px 32px;
  column-gap: 3px;
  row-gap: 3px;
  align-items: center;
}
.nums label {
  display: flex;
  justify-content: flex-end;
  white-space: nowrap;
}
.nums input {
  width: 32px;
  height: 26px;
  padding: 0 3px;
  border: 1px solid #777;
  background: #fff;
}
.nums .focus {
  border-color: #0f74c4;
}
.add {
  width: 247px;
  margin: 6px 0 0 1px;
}
```
